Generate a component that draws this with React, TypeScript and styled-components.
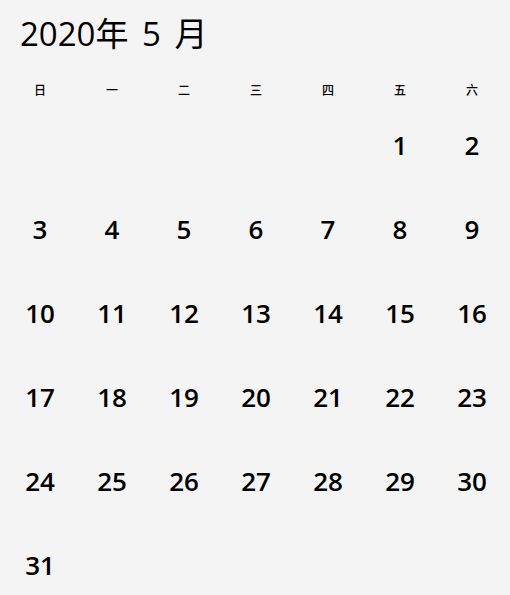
import React from "react";
import styled, { createGlobalStyle } from "styled-components";

const Global = createGlobalStyle`
  html, body { margin: 0; padding: 0; background: #f4f4f4; }
  body { font-family: "Open Sans", "Noto Sans CJK SC", sans-serif; color: #000; }
`;

const Page = styled.div`
  width: 510px;
  height: 595px;
  background: #f4f4f4;
  overflow: hidden;
`;

const Title = styled.h1`
  margin: 14px 0 0 20px;
  font-size: 33px;
  font-weight: 400;
  line-height: 40px;
  height: 40px;
  word-spacing: 5px;
  font-family: "Open Sans", "Noto Sans CJK SC", sans-serif;
`;

const Grid = styled.div`
  display: grid;
  grid-template-columns: repeat(7, 72px);
  margin: 21px 0 0 4px;
`;

const Head = styled.div`
  height: 28px;
  display: flex;
  align-items: center;
  justify-content: center;
  font-size: 12px;
  font-weight: 500;
  font-family: "Noto Sans CJK SC", sans-serif;
`;

const Day = styled.div`
  height: 84px;
  display: flex;
  align-items: center;
  justify-content: center;
  font-size: 26px;
  font-weight: 600;
`;

const heads = ["日", "一", "二", "三", "四", "五", "六"];

export default function App() {
  const cells: (number | null)[] = [];
  for (let i = 0; i < 5; i++) cells.push(null);
  for (let d = 1; d <= 31; d++) cells.push(d);
  return (
    <Page>
      <Global />
      <Title>2020年 5 月</Title>
      <Grid>
        {heads.map((h) => (
          <Head key={h}>{h}</Head>
        ))}
        {cells.map((c, i) => (
          <Day key={i}>{c ?? ""}</Day>
        ))}
      </Grid>
    </Page>
  );
}
